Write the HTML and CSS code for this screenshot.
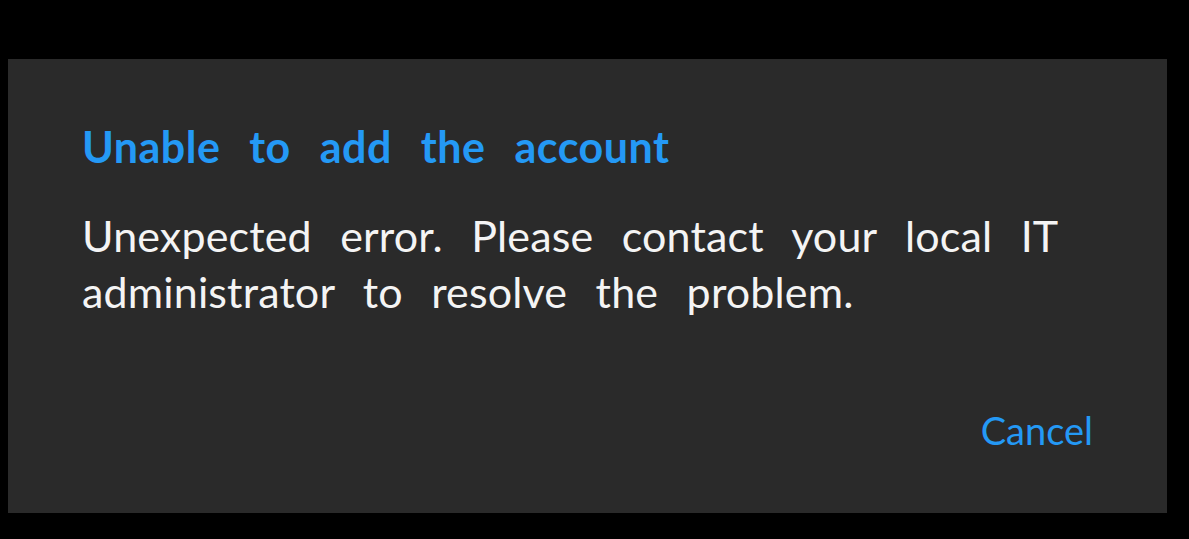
FILE: index.html
```html
<!DOCTYPE html>
<html>
<head>
<meta charset="utf-8">
<link rel="stylesheet" href="styles.css">
</head>
<body>
<div class="dialog">
  <h1 class="title">Unable to add the account</h1>
  <p class="message">Unexpected error. Please contact your local IT administrator to resolve the problem.</p>
  <div class="actions"><span class="btn">Cancel</span></div>
</div>
</body>
</html>
```
FILE: styles.css
```css
html, body {
  margin: 0;
  padding: 0;
  background: #000;
  width: 1189px;
  height: 539px;
  overflow: hidden;
}
.dialog {
  margin: 59px 0 0 8px;
  width: 1159px;
  height: 454px;
  box-sizing: border-box;
  background: #2a2a2a;
  padding: 60px 74px 0 74px;
  display: flex;
  flex-direction: column;
  font-family: Lato, "Open Sans", sans-serif;
}
.title {
  margin: 0;
  color: #2499f5;
  font-size: 43px;
  font-weight: 700;
  line-height: 56px;
  letter-spacing: 0.5px;
  word-spacing: 18px;
}
.message {
  margin: 33px 0 0 0;
  color: #f4f4f4;
  font-size: 43px;
  font-weight: 400;
  line-height: 56px;
  letter-spacing: 0.15px;
  word-spacing: 17.3px;
  width: 1020px;
}
.actions {
  display: flex;
  justify-content: flex-end;
  margin-top: 90px;
}
.btn {
  color: #2499f5;
  font-size: 38px;
  line-height: 40px;
}
```
